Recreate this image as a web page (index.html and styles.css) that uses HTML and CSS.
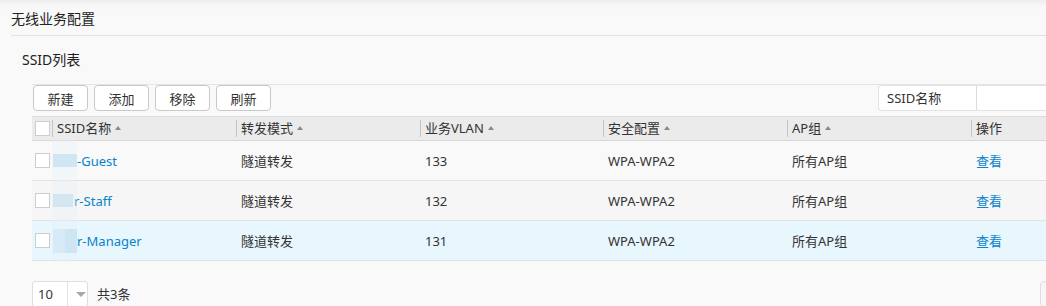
FILE: index.html
```html
<!DOCTYPE html>
<html lang="zh-CN">
<head>
    <meta charset="UTF-8">
    <title>无线业务配置</title>
    <link rel="stylesheet" href="styles.css">
</head>
<body>
<div class="page">
    <div class="page-title">无线业务配置</div>

    <div class="panel">
        <div class="panel-title">SSID列表</div>

        <div class="toolbar">
            <div class="btn-group">
                <button class="btn">新建</button>
                <button class="btn">添加</button>
                <button class="btn">移除</button>
                <button class="btn">刷新</button>
            </div>
            <div class="search">
                <span class="search-label">SSID名称</span>
                <input class="search-input" type="text">
            </div>
        </div>

        <div class="grid">
            <table>
                <colgroup>
                    <col style="width: 20px">
                    <col style="width: 184px">
                    <col style="width: 184px">
                    <col style="width: 183px">
                    <col style="width: 184px">
                    <col style="width: 184px">
                    <col>
                </colgroup>
                <thead>
                <tr>
                    <th><span class="check"></span></th>
                    <th><div class="th-inner">SSID名称<i class="sort"></i></div></th>
                    <th><div class="th-inner">转发模式<i class="sort"></i></div></th>
                    <th><div class="th-inner">业务VLAN<i class="sort"></i></div></th>
                    <th><div class="th-inner">安全配置<i class="sort"></i></div></th>
                    <th><div class="th-inner">AP组<i class="sort"></i></div></th>
                    <th><div class="th-inner">操作</div></th>
                </tr>
                </thead>
                <tbody>
                <tr>
                    <td><span class="check"></span></td>
                    <td class="name"><span class="mask"></span><a href="#">-Guest</a></td>
                    <td>隧道转发</td>
                    <td>133</td>
                    <td>WPA-WPA2</td>
                    <td>所有AP组</td>
                    <td><a href="#">查看</a></td>
                </tr>
                <tr>
                    <td><span class="check"></span></td>
                    <td class="name"><span class="mask short"></span><a href="#">r-Staff</a></td>
                    <td>隧道转发</td>
                    <td>132</td>
                    <td>WPA-WPA2</td>
                    <td>所有AP组</td>
                    <td><a href="#">查看</a></td>
                </tr>
                <tr class="selected">
                    <td><span class="check"></span></td>
                    <td class="name"><span class="mask tall"></span><a href="#">r-Manager</a></td>
                    <td>隧道转发</td>
                    <td>131</td>
                    <td>WPA-WPA2</td>
                    <td>所有AP组</td>
                    <td><a href="#">查看</a></td>
                </tr>
                </tbody>
            </table>
            <div class="blur"></div>
        </div>

        <div class="footer">
            <div class="page-size">
                <span class="page-size-value">10</span>
                <span class="page-size-arrow"></span>
            </div>
            <span class="total">共3条</span>
            <div class="pager"></div>
        </div>
    </div>
</div>
</body>
</html>
```

FILE: styles.css
```css
html, body {
    margin: 0;
    padding: 0;
    overflow: hidden;
}

body {
    font-family: "Noto Sans", "Noto Sans CJK SC", sans-serif;
    font-size: 13px;
    color: #333;
    background-color: #f9f9f9;
}

.page {
    width: 1130px;
    height: 306px;
    background: linear-gradient(#ececec 0, #f8f8f8 6px, #f9f9f9 14px);
}

.page-title {
    margin-left: 11px;
    height: 35px;
    line-height: 38px;
    font-size: 14px;
    color: #222;
    border-bottom: 1px solid #e2e2e2;
}

.panel {
    padding-left: 32px;
}

.panel-title {
    margin-left: -10px;
    height: 48px;
    line-height: 48px;
    font-size: 14px;
    color: #222;
}

.toolbar {
    display: flex;
    justify-content: space-between;
    height: 31px;
    border-top: 1px solid #e4e4e4;
}

.btn-group {
    display: flex;
    gap: 6px;
    padding-left: 1px;
}

.btn {
    width: 55px;
    height: 26px;
    padding: 0;
    font-family: inherit;
    font-size: 13px;
    color: #333;
    background-color: #fff;
    border: 1px solid #c9c9c9;
    border-radius: 4px;
}

.search {
    display: flex;
    height: 26px;
}

.search-label {
    width: 99px;
    box-sizing: border-box;
    padding-left: 8px;
    line-height: 24px;
    background-color: #fff;
    border: 1px solid #e3e3e3;
    border-right: 1px solid #dcdcdc;
    border-radius: 4px 0 0 4px;
}

.search-input {
    width: 153px;
    height: 26px;
    box-sizing: border-box;
    margin: 0;
    border: 1px solid #e3e3e3;
    border-left: none;
    background-color: #fff;
    outline: none;
}

.grid {
    position: relative;
}

table {
    width: 100%;
    table-layout: fixed;
    border-collapse: collapse;
}

th {
    height: 23px;
    padding: 0;
    text-align: left;
    font-weight: normal;
    color: #333;
    background-color: #ebebeb;
    border-top: 1px solid #dcdcdc;
    border-bottom: 1px solid #d8d8d8;
}

.th-inner {
    height: 17px;
    line-height: 17px;
    padding-left: 4px;
    border-left: 1px solid #c4c4c4;
    white-space: nowrap;
}

.sort {
    display: inline-block;
    margin-left: 4px;
    width: 0;
    height: 0;
    border-left: 3.5px solid transparent;
    border-right: 3.5px solid transparent;
    border-bottom: 4px solid #8a8a8a;
    vertical-align: 3px;
}

td {
    height: 39px;
    padding: 0 0 0 5px;
    border-bottom: 1px solid #e2e2e2;
    background-color: #f9f9f9;
    white-space: nowrap;
}

tbody tr:nth-child(2) td {
    background-color: #f6f6f6;
}

tbody tr.selected td {
    background-color: #e8f6fd;
}

th:first-child,
td:first-child {
    padding: 0 0 0 3px;
}

td.name {
    padding-left: 1px;
}

.check {
    display: block;
    width: 13px;
    height: 13px;
    background-color: #fff;
    border: 1px solid #cdcdcd;
}

a {
    color: #0784cc;
    text-decoration: none;
}

.mask {
    display: inline-block;
    width: 24px;
    height: 13px;
    background-color: #c4e2f1;
    vertical-align: -1px;
}

.mask.short {
    width: 20px;
    margin-right: 1px;
    background-color: #c9e2ee;
}

.mask.tall {
    height: 24px;
    vertical-align: -7px;
    background: linear-gradient(90deg, #cde9f7 50%, #c0e1f3 50%);
}

.blur {
    position: absolute;
    left: 20px;
    top: 24px;
    width: 25px;
    height: 122px;
    border-radius: 0 0 8px 8px;
    background-color: rgba(232, 240, 245, 0.35);
    pointer-events: none;
}

.footer {
    display: flex;
    align-items: center;
    gap: 9px;
    margin-top: 20px;
}

.page-size {
    display: flex;
    width: 56px;
    height: 26px;
    box-sizing: border-box;
    background-color: #fff;
    border: 1px solid #dedede;
    border-radius: 3px;
}

.page-size-value {
    width: 29px;
    padding-left: 5px;
    line-height: 24px;
    border-right: 1px solid #e3e3e3;
}

.page-size-arrow {
    flex: 1;
    position: relative;
}

.page-size-arrow::after {
    content: "";
    position: absolute;
    left: 8px;
    top: 10px;
    border-left: 5px solid transparent;
    border-right: 5px solid transparent;
    border-top: 5px solid #a8a8a8;
}

.total {
    line-height: 26px;
}

.pager {
    margin-left: auto;
    width: 90px;
    height: 26px;
    box-sizing: border-box;
    border: 1px solid #dedede;
    border-radius: 4px;
    background-color: #f6f6f6;
}
```
